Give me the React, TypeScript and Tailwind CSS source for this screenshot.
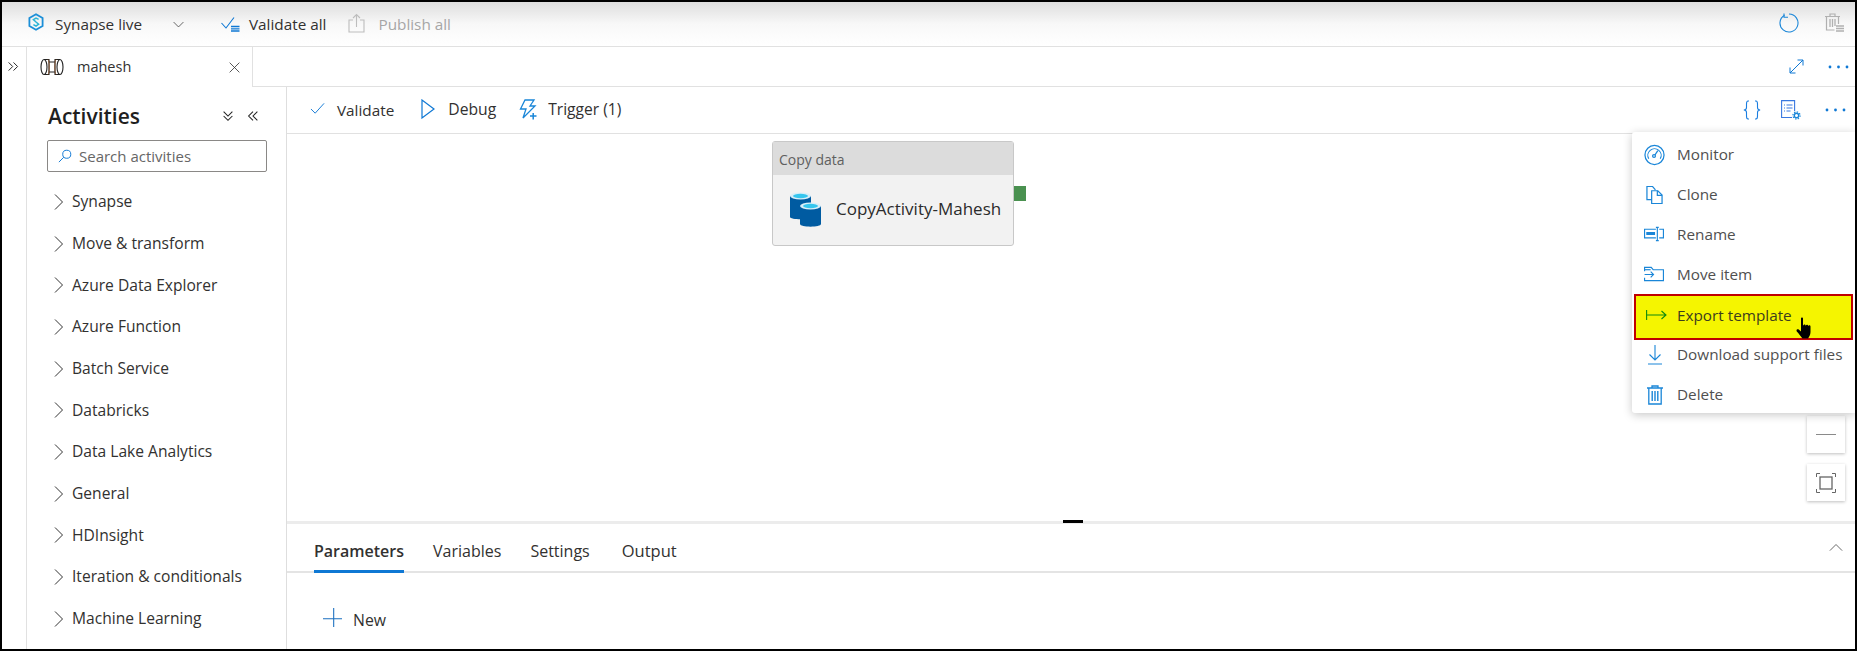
import React from "react";

const B = "#0f78d4";
type P = { className?: string };

const Hex = ({ className }: P) => (
  <svg viewBox="0 0 16 18" className={className} fill="none">
    <path d="M8 1.2 14.6 5v8L8 16.8 1.4 13V5z" stroke="#1c8fd8" strokeWidth="1.8" />
    <path d="M10.6 6.3 8 5 5.4 6.6 8 9l2.6 2.2L8 13l-2.6-1.4" stroke="#2ab5d6" strokeWidth="1.5" />
  </svg>
);
const Chev = ({ d, className, stroke = "#444", sw = 1 }: P & { d: string; stroke?: string; sw?: number }) => (
  <svg viewBox="0 0 16 16" className={className} fill="none" stroke={stroke} strokeWidth={sw}>
    <path d={d} />
  </svg>
);
const ValidateAll = ({ className }: P) => (
  <svg viewBox="0 0 19 16" className={className} fill="none" stroke={B} strokeWidth="1.1">
    <path d="M0.5 7 5 12 13 1.5" />
    <path d="M10 10.5h8.5M10 12.8h8.5M10 15h8.5" strokeWidth="1.3" />
  </svg>
);
const Publish = ({ className }: P) => (
  <svg viewBox="0 0 17 20" className={className} fill="none" stroke="#bdbdbd" strokeWidth="1.1">
    <path d="M5 7H1v12h15V7h-4" />
    <path d="M8.5 14V1.5M5 5l3.500-3.500L12 5" />
  </svg>
);
const Pipeline = ({ className }: P) => (
  <svg viewBox="0 0 24 18" className={className} fill="none" stroke="#222" strokeWidth="1.1">
    <ellipse cx="4" cy="9" rx="3" ry="7.500" />
    <ellipse cx="20" cy="9" rx="3" ry="7.500" />
    <path d="M4 1.500h5v15H4M20 1.500h-5v15h5M9 4h6M9 14h6" />
    <path d="M8 1.500c1.600 1.500 1.600 13.500 0 15M16 1.500c-1.600 1.500-1.600 13.500 0 15" stroke="#8a4b20" strokeWidth=".8" />
  </svg>
);
const Search = ({ className }: P) => (
  <svg viewBox="0 0 16 16" className={className} fill="none" stroke={B} strokeWidth="1.1">
    <circle cx="10" cy="6" r="4.600" />
    <path d="M6.600 9.400 1 15" />
  </svg>
);
const Play = ({ className }: P) => (
  <svg viewBox="0 0 14 20" className={className} fill="none" stroke={B} strokeWidth="1.2">
    <path d="M1 1v18l12-9z" />
  </svg>
);
const Trigger = ({ className }: P) => (
  <svg viewBox="0 0 18 21" className={className} fill="none" stroke="#1a86d8" strokeWidth="1.3">
    <path d="M6 1h9l-4 6h5L4 19l3-9H1.500z" />
    <path d="M11 17h6.500M14.200 14v6.500" strokeWidth="1.500" />
  </svg>
);
const Dots = ({ className }: P) => (
  <svg viewBox="0 0 21 4" className={className} fill={B}>
    <circle cx="2" cy="2" r="1.400" />
    <circle cx="10.500" cy="2" r="1.400" />
    <circle cx="19" cy="2" r="1.400" />
  </svg>
);
const Refresh = ({ className }: P) => (
  <svg viewBox="0 0 20 20" className={className} fill="none" stroke="#1a86d8" strokeWidth="1.1">
    <path d="M5.500 2.200A9 9 0 1 0 10 1" />
    <path d="M5 .5v3.800h4" />
  </svg>
);
const TrashAll = ({ className }: P) => (
  <svg viewBox="0 0 19 20" className={className} fill="none" stroke="#b0b0b0" strokeWidth="1.2">
    <path d="M0 3.500h15M5 3.500V1h5v2.500M1.500 3.500v13.500h8M13.500 3.500V11" />
    <path d="M5 6v8M7.500 6v8M10 6v7" strokeWidth="1.300" />
    <path d="M11 13h8M11 15.500h8M11 18h8" strokeWidth="1.300" />
  </svg>
);
const Expand = ({ className }: P) => (
  <svg viewBox="0 0 15 15" className={className} fill="none" stroke={B} strokeWidth="1">
    <path d="M1 14 14 1M8.500 1H14v5.500M1 8.500V14h5.500" />
  </svg>
);
const Braces = ({ className }: P) => (
  <svg viewBox="0 0 18 20" className={className} fill="none" stroke="#1a7ee0" strokeWidth="1.1">
    <path d="M6 1H5C3.500 1 3.500 2.500 3.500 4v3.500C3.500 9 2 10 .8 10c1.200 0 2.700 1 2.700 2.500V16c0 1.500 0 3 1.500 3h1" />
    <path d="M12 1h1c1.500 0 1.500 1.500 1.500 3v3.500c0 1.500 1.500 2.500 2.700 2.500-1.200 0-2.700 1-2.700 2.500V16c0 1.500 0 3-1.500 3h-1" />
  </svg>
);
const DocGear = ({ className }: P) => (
  <svg viewBox="0 0 20 20" className={className} fill="none" stroke="#3a78e0" strokeWidth="1.1">
    <path d="M11 17.500H.6V.6h13v10.500" />
    <path d="M3 5h1M5.500 5h6M3 8h1M5.500 8h6M3 11h1M5.500 11h4" />
    <circle cx="15.500" cy="15.500" r="2.200" strokeWidth="1.400" stroke="#1a86d8" />
    <circle cx="15.500" cy="15.500" r="3.600" strokeWidth="1.200" strokeDasharray="1.400 1.400" stroke="#1a86d8" />
  </svg>
);
const Monitor = ({ className }: P) => (
  <svg viewBox="0 0 22 22" className={className} fill="none" stroke="#1a86d8" strokeWidth="1.300">
    <circle cx="11" cy="11" r="10" />
    <path d="M5 15A7 7 0 1 1 17 15" strokeWidth="1.100" />
    <circle cx="10.500" cy="12" r="1.500" />
    <path d="m11.500 10.800 3-4.300" />
  </svg>
);
const Clone = ({ className }: P) => (
  <svg viewBox="0 0 18 20" className={className} fill="none" stroke="#1a86d8" strokeWidth="1.300">
    <path d="M6 15H1V1h6l3 3.500" />
    <path d="M6 5.500h6.500L17 10v9H6z" />
    <path d="M12 5.500V10.500h5" />
  </svg>
);
const Rename = ({ className }: P) => (
  <svg viewBox="0 0 21 16" className={className} fill="none" stroke="#1a86d8" strokeWidth="1.200">
    <path d="M12.500 3H.6v9h11.900" />
    <path d="M3 6.500h8v2H3z" fill="#1a86d8" />
    <path d="M12.500 1h3M12.500 15h3M14 1v14M16 3h4.400v9H16" />
  </svg>
);
const MoveItem = ({ className }: P) => (
  <svg viewBox="0 0 21 16" className={className} fill="none" stroke="#1a86d8" strokeWidth="1.200">
    <path d="M.6 5V1h7l2 2.500h10.800V15H.6v-3" />
    <path d="M.6 3.500H7" />
    <path d="M.6 8.500H10M7 5.500l3 3-3 3" />
  </svg>
);
const ExportT = ({ className }: P) => (
  <svg viewBox="0 0 21 10" className={className} fill="none" stroke="#0f8a0f" strokeWidth="1.100">
    <path d="M.6 0v10M.6 5H20M15.500 1 20 5l-4.500 4" />
  </svg>
);
const Download = ({ className }: P) => (
  <svg viewBox="0 0 14 20" className={className} fill="none" stroke="#1a86d8" strokeWidth="1.100">
    <path d="M7 0v15M1.500 9.500 7 15l5.500-5.500M0 19h14" />
  </svg>
);
const Trash = ({ className }: P) => (
  <svg viewBox="0 0 16 20" className={className} fill="none" stroke="#1a86d8" strokeWidth="1.300">
    <path d="M0 3h16M5 3V1h6v2M1.800 3v16h12.400V3" />
    <path d="M5.200 6v10M8 6v10M10.800 6v10" strokeWidth="1.400" />
  </svg>
);
const Fit = ({ className }: P) => (
  <svg viewBox="0 0 20 20" className={className} fill="none" stroke="#666" strokeWidth="1">
    <path d="M.5 4V.5H4M16 .5h3.500V4M.5 16v3.500H4M16 19.500h3.500V16" />
    <rect x="4" y="4" width="12" height="12" strokeWidth="1.300" />
  </svg>
);
const Cylinder = ({ className }: P) => (
  <svg viewBox="0 0 31 35" className={className}>
    <path d="M0 4h21v21c0 3-21 3-21 0z" fill="#005ba1" />
    <ellipse cx="10.500" cy="4" rx="10.500" ry="3.500" fill="#d8eef8" />
    <ellipse cx="10.500" cy="4" rx="7.500" ry="2.200" fill="#36c6ee" />
    <path d="M10 14h21v18c0 3.500-21 3.500-21 0z" fill="#005ba1" />
    <ellipse cx="20.500" cy="14" rx="10.500" ry="3.500" fill="#d8eef8" />
    <ellipse cx="20.500" cy="14" rx="7.500" ry="2.200" fill="#36c6ee" />
  </svg>
);
const Hand = ({ className }: P) => (
  <svg viewBox="0 0 17 22" className={className}>
    <path
      d="M5 1.500C5 .3 7 .3 7 1.500V9c.4-2 2.500-2 2.700-.2.4-1.500 2.400-1.400 2.500.2.500-1.200 2.300-1 2.300.5V15c0 3-1.500 5-2.500 6.500H6.500C5 19.500 3 17 .8 14.500-.2 13 1.500 11.500 3 12.800L5 14.500z"
      fill="#000"
    />
  </svg>
);

const activities = [
  "Synapse",
  "Move & transform",
  "Azure Data Explorer",
  "Azure Function",
  "Batch Service",
  "Databricks",
  "Data Lake Analytics",
  "General",
  "HDInsight",
  "Iteration & conditionals",
  "Machine Learning",
];

const menu = [
  { t: "Monitor", I: Monitor, c: "w-[22px] h-[22px] ml-[12px] mr-[12px]" },
  { t: "Clone", I: Clone, c: "w-[18px] h-[20px] ml-[14px] mr-[14px]" },
  { t: "Rename", I: Rename, c: "w-[21px] h-[16px] ml-[12px] mr-[13px]" },
  { t: "Move item", I: MoveItem, c: "w-[21px] h-[16px] ml-[12px] mr-[13px]" },
];

export default function App() {
  return (
    <div className="w-[1857px] h-[651px] border-2 border-black bg-white flex flex-col overflow-hidden font-['Open_Sans','Noto_Sans',sans-serif] text-[15.3px] text-[#323130]">
      <header className="h-[45px] shrink-0 flex items-center border-b border-[#e1e1e1] bg-gradient-to-b from-[#dedede] via-[#f8f8f8] to-white pl-[26px] pr-[11px]">
        <Hex className="w-[16px] h-[18px] mb-[4px]" />
        <span className="ml-[11px] w-[92px]">Synapse live</span>
        <Chev d="M2 5l6 6 6-6" className="w-[13px] h-[13px] ml-[25px]" />
        <ValidateAll className="w-[19px] h-[16px] ml-[36px]" />
        <span className="ml-[9px]">Validate all</span>
        <Publish className="w-[17px] h-[20px] ml-[22px] mb-[2px]" />
        <span className="ml-[13px] text-[#a6a6a6]">Publish all</span>
        <Refresh className="w-[20px] h-[20px] ml-auto mb-[2px]" />
        <TrashAll className="w-[19px] h-[20px] ml-[26px] mb-[2px]" />
      </header>

      <div className="flex-1 flex min-h-0">
        <div className="w-[25px] shrink-0 border-r border-[#e1e1e1] pt-[13px] pl-[5px]">
          <Chev d="M2 3l5 5-5 5M8 3l5 5-5 5" className="w-[13px] h-[13px]" stroke="#222" sw={1.2} />
        </div>

        <div className="flex-1 min-w-0 flex flex-col">
          <div className="h-[40px] shrink-0 flex">
            <div className="w-[226px] shrink-0 border-r border-[#e1e1e1] flex items-center pl-[13px] pr-[11px]">
              <Pipeline className="w-[24px] h-[18px]" />
              <span className="ml-[13px] font-medium text-[14.5px]">mahesh</span>
              <Chev d="M2 2l12 12M14 2 2 14" className="w-[13px] h-[13px] ml-auto" stroke="#333" />
            </div>
            <div className="flex-1 border-b border-[#e1e1e1] flex items-center justify-end pr-[6px]">
              <Expand className="w-[15px] h-[15px]" />
              <Dots className="w-[21px] h-[4px] ml-[24px]" />
            </div>
          </div>

          <div className="flex-1 flex min-h-0">
            <aside className="w-[260px] shrink-0 border-r border-[#dedede] flex flex-col overflow-hidden">
              <div className="h-[53px] shrink-0 flex items-start pl-[21px] pr-[26px] pt-[14px]">
                <h2 className="text-[21px] leading-[30px] font-semibold text-[#1f1f1f]">Activities</h2>
                <Chev d="M3 3l5 5 5-5M3 8l5 5 5-5" className="w-[14px] h-[14px] ml-auto mt-[8px]" stroke="#222" sw={1.2} />
                <Chev d="M8 3 3 8l5 5M13 3 8 8l5 5" className="w-[14px] h-[14px] ml-[11px] mt-[8px]" stroke="#222" sw={1.2} />
              </div>
              <div className="h-[32px] shrink-0 mx-[20px] w-[220px] border border-[#8a8886] rounded-[2px] flex items-center pl-[10px] text-[#666]">
                <Search className="w-[14px] h-[14px]" />
                <span className="ml-[7px] text-[15px]">Search activities</span>
              </div>
              <ul className="mt-[9px] pl-[24px]">
                {activities.map((a) => (
                  <li key={a} className="h-[41.700px] flex items-center font-medium text-[15.600px] text-[#323130]">
                    <Chev d="M4 .5l7.500 7.500L4 15.500" className="w-[16px] h-[16px] mr-[5px]" stroke="#333" />
                    {a}
                  </li>
                ))}
              </ul>
            </aside>

            <main className="flex-1 min-w-0 flex flex-col relative">
              <div className="h-[47px] shrink-0 border-b border-[#e1e1e1] flex items-center pl-[23px] pr-[9px]">
                <Chev d="M1 8.500l4.500 4.500L15 2.500" className="w-[15px] h-[15px] mb-[3px]" stroke={B} />
                <span className="ml-[12px]">Validate</span>
                <Play className="w-[14px] h-[20px] ml-[27px] mb-[3px]" />
                <span className="ml-[13px] text-[15.700px]">Debug</span>
                <Trigger className="w-[18px] h-[21px] ml-[23px] mb-[2px]" />
                <span className="ml-[11px] text-[15.600px]">Trigger (1)</span>
                <Braces className="w-[18px] h-[20px] ml-auto" />
                <DocGear className="w-[20px] h-[20px] ml-[20px]" />
                <Dots className="w-[21px] h-[4px] ml-[24px]" />
              </div>

              <div className="flex-1 relative min-h-0">
                <div className="absolute left-[485px] top-[7px] w-[242px] h-[105px] rounded-[3px] border border-[#c8c8c8] bg-[#f2f2f2] flex flex-col">
                  <div className="h-[33px] shrink-0 bg-[#dcdcdc] flex items-center pl-[6px] pt-[2px] text-[14px] text-[#5f5f5f]">Copy data</div>
                  <div className="flex-1 flex items-center pl-[17px] pb-[2px]">
                    <Cylinder className="w-[31px] h-[35px]" />
                    <span className="ml-[15px] text-[17px] text-[#2b2b2b]">CopyActivity-Mahesh</span>
                  </div>
                </div>
                <div className="absolute left-[727px] top-[52px] w-[12px] h-[15px] bg-[#4a9150]" />

                <div className="absolute right-[10px] top-[282px] w-[38px] flex flex-col gap-[11px]">
                  <div className="h-[37px] bg-white shadow-[0_1px_3px_rgba(0,0,0,0.25)] flex items-center justify-center">
                    <span className="w-[20px] h-px bg-[#8a8a8a]" />
                  </div>
                  <div className="h-[37px] bg-white shadow-[0_1px_3px_rgba(0,0,0,0.25)] flex items-center justify-center">
                    <Fit className="w-[20px] h-[20px]" />
                  </div>
                </div>
              </div>

              <div className="h-[3px] shrink-0 bg-[#ececec] relative">
                <span className="absolute left-[776px] -top-px w-[20px] h-[3px] bg-black" />
              </div>

              <div className="h-[125px] shrink-0 flex flex-col">
                <div className="h-[49px] shrink-0 border-b-2 border-[#e4e4e4] flex items-stretch pl-[27px] pr-[12px] text-[16px] text-[#323130]">
                  <span className="-mb-[2px] pt-[7px] flex items-center border-b-[3px] border-[#0f78d4] font-semibold">Parameters</span>
                  <span className="flex items-center pt-[7px] ml-[29px]">Variables</span>
                  <span className="flex items-center pt-[7px] ml-[29px]">Settings</span>
                  <span className="flex items-center pt-[7px] ml-[32px] text-[16.500px]">Output</span>
                  <span className="ml-auto flex items-center pt-[1px]">
                    <Chev d="M1 11l7-7 7 7" className="w-[14px] h-[14px]" stroke="#555" />
                  </span>
                </div>
                <div className="flex items-center pl-[36px] pt-[30px]">
                  <Chev d="M9 0v18M0 9h18" className="w-[19px] h-[19px]" stroke="#1a6fc0" sw={0.9} />
                  <span className="ml-[11px] mt-[6px] text-[15.800px]">New</span>
                </div>
              </div>

              <div className="absolute right-0 top-[45px] w-[223px] h-[281px] bg-white rounded-l-[3px] shadow-[0_2px_10px_rgba(0,0,0,0.22)] pt-[3px] text-[#505050]">
                {menu.map(({ t, I, c }) => (
                  <div key={t} className="h-[39.800px] flex items-center">
                    <span className="w-[45px] shrink-0 flex items-center">
                      <I className={c} />
                    </span>
                    {t}
                  </div>
                ))}
                <div className="relative ml-[2px] mr-[2px] h-[46px] -mb-[6px] z-10 border-2 border-[#c00000] bg-[#f5f500] flex items-center pb-[4px] text-[#3c3c1e]">
                  <span className="w-[41px] shrink-0 flex items-center">
                    <ExportT className="w-[21px] h-[10px] ml-[10px]" />
                  </span>
                  Export template
                  <Hand className="absolute left-[160px] top-[21px] w-[17px] h-[22px]" />
                </div>
                <div className="h-[40.800px] flex items-center">
                  <span className="w-[45px] shrink-0 flex items-center">
                    <Download className="w-[14px] h-[20px] ml-[16px]" />
                  </span>
                  Download support files
                </div>
                <div className="h-[39.800px] flex items-center">
                  <span className="w-[45px] shrink-0 flex items-center">
                    <Trash className="w-[16px] h-[20px] ml-[15px]" />
                  </span>
                  Delete
                </div>
              </div>
            </main>
          </div>
        </div>
      </div>
    </div>
  );
}
